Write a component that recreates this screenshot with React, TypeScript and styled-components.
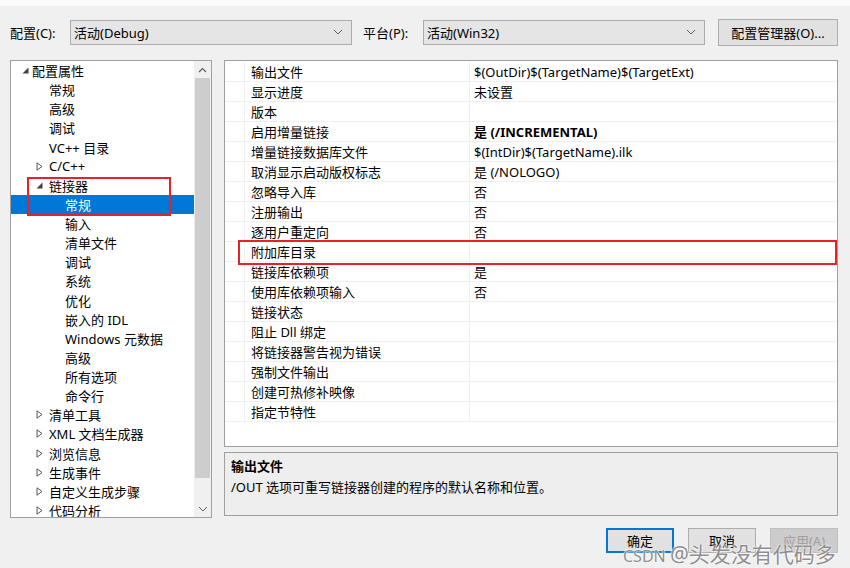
import styled, { createGlobalStyle } from 'styled-components'

const GlobalStyle = createGlobalStyle`
  html, body {
    margin: 0;
    padding: 0;
    background: #f0f0f0;
  }
  body {
    font-family: "Noto Sans", "Noto Sans CJK SC", sans-serif;
    font-size: 13px;
    color: #000;
  }
`

const Dialog = styled.div`
  position: relative;
  width: 850px;
  height: 568px;
  background: #f0f0f0;
  border-top: 6px solid #fbfbfb;
  box-sizing: border-box;
  overflow: hidden;
`

const Toolbar = styled.div`
  display: flex;
  align-items: center;
  height: 40px;
  padding: 12px 0 0 10px;
  box-sizing: border-box;
`

const Label = styled.span`
  width: ${p => p.$w}px;
  white-space: nowrap;
`

const Combo = styled.div`
  display: flex;
  align-items: center;
  justify-content: space-between;
  width: 282px;
  height: 25px;
  box-sizing: border-box;
  padding: 0 8px 0 3px;
  background: #e5e5e5;
  border: 1px solid #acacac;
  margin-right: ${p => p.$mr}px;
`

const ToolButton = styled.div`
  width: 120px;
  height: 27px;
  box-sizing: border-box;
  display: flex;
  align-items: center;
  justify-content: center;
  background: #e1e1e1;
  border: 1px solid #adadad;
`

const Main = styled.div`
  display: flex;
  gap: 12px;
  padding: 14px 0 0 10px;
`

const TreePanel = styled.div`
  position: relative;
  width: 202px;
  height: 458px;
  box-sizing: border-box;
  background: #fff;
  border: 1px solid #a0a0a0;
  display: flex;
`

const TreeList = styled.div`
  flex: 1;
  overflow: hidden;
`

const TreeRow = styled.div`
  height: 19.13px;
  display: flex;
  align-items: center;
  padding-left: ${p => p.$indent}px;
  background: ${p => (p.$selected ? '#0078d7' : 'transparent')};
  color: ${p => (p.$selected ? '#fff' : '#000')};
  white-space: nowrap;
`

const Twisty = styled.span`
  width: ${p => p.$w}px;
  display: flex;
  align-items: center;
`

const ScrollBar = styled.div`
  width: 17px;
  background: #f0f0f0;
  display: flex;
  flex-direction: column;
  align-items: center;
`

const ScrollArrow = styled.div`
  height: 17px;
  display: flex;
  align-items: center;
  justify-content: center;
`

const ScrollThumb = styled.div`
  width: 15px;
  height: 400px;
  background: #cdcdcd;
`

const ScrollSpacer = styled.div`
  flex: 1;
`

const RedBox = styled.div`
  position: absolute;
  border: 2px solid #e2232a;
  box-sizing: border-box;
  pointer-events: none;
`

const RightCol = styled.div`
  display: flex;
  flex-direction: column;
  gap: 5px;
  width: 614px;
`

const Grid = styled.div`
  position: relative;
  height: 387px;
  box-sizing: border-box;
  background: #fff;
  border: 1px solid #a0a0a0;
  padding-top: 1px;
`

const PropRow = styled.div`
  display: grid;
  grid-template-columns: 20px 225px 1fr;
  height: 20px;
  box-sizing: border-box;
  border-bottom: 1px solid #f0f0f0;
`

const Gutter = styled.div`
  border-right: 1px solid #f0f0f0;
  background: #fff;
`

const Cell = styled.div`
  display: flex;
  align-items: center;
  padding-left: ${p => p.$pl}px;
  font-weight: ${p => (p.$bold ? 700 : 400)};
  border-right: ${p => (p.$divider ? '1px solid #f0f0f0' : 'none')};
  white-space: nowrap;
`

const Desc = styled.div`
  height: 64px;
  box-sizing: border-box;
  background: #eeeeee;
  border: 1px solid #a0a0a0;
  padding: 3px 6px;
  line-height: 21px;
`

const DescTitle = styled.div`
  font-weight: 700;
`

const Footer = styled.div`
  display: flex;
  justify-content: flex-end;
  gap: 14px;
  padding: 10px 12px 0 0;
`

const DlgButton = styled.div`
  width: 68px;
  height: 25px;
  box-sizing: border-box;
  display: flex;
  align-items: center;
  justify-content: center;
  background: ${p => (p.$disabled ? '#cccccc' : '#e1e1e1')};
  color: ${p => (p.$disabled ? '#a0a0a0' : '#000')};
  border: ${p =>
    p.$primary ? '2px solid #0078d7' : p.$disabled ? '1px solid #bfbfbf' : '1px solid #adadad'};
`

const Watermark = styled.div`
  position: absolute;
  left: 623px;
  top: 532px;
  font-size: 21px;
  color: #8f8f8f;
  white-space: nowrap;
  text-shadow: 0 0 2px #fff, 0 0 2px #fff;
  pointer-events: none;
`

const WatermarkSmall = styled.span`
  font-size: 16px;
`

function Chevron() {
  return (
    <svg width="10" height="6" viewBox="0 0 10 6">
      <path d="M1 1 L5 5 L9 1" fill="none" stroke="#606060" strokeWidth="1" />
    </svg>
  )
}

function Expanded() {
  return (
    <svg width="7" height="7" viewBox="0 0 7 7">
      <path d="M6.5 0.5 L6.5 6.5 L0.5 6.5 Z" fill="#404040" />
    </svg>
  )
}

function Collapsed() {
  return (
    <svg width="7" height="9" viewBox="0 0 7 9">
      <path d="M1 0.8 L6 4.5 L1 8.2 Z" fill="none" stroke="#555" strokeWidth="1" />
    </svg>
  )
}

type Node = { label: string; indent: number; twisty?: 'open' | 'closed'; selected?: boolean }

// indent = where the label starts, measured from the panel's inner edge
const tree: Node[] = [
  { label: '配置属性', indent: 21, twisty: 'open' },
  { label: '常规', indent: 38 },
  { label: '高级', indent: 38 },
  { label: '调试', indent: 38 },
  { label: 'VC++ 目录', indent: 38 },
  { label: 'C/C++', indent: 38, twisty: 'closed' },
  { label: '链接器', indent: 38, twisty: 'open' },
  { label: '常规', indent: 54, selected: true },
  { label: '输入', indent: 54 },
  { label: '清单文件', indent: 54 },
  { label: '调试', indent: 54 },
  { label: '系统', indent: 54 },
  { label: '优化', indent: 54 },
  { label: '嵌入的 IDL', indent: 54 },
  { label: 'Windows 元数据', indent: 54 },
  { label: '高级', indent: 54 },
  { label: '所有选项', indent: 54 },
  { label: '命令行', indent: 54 },
  { label: '清单工具', indent: 38, twisty: 'closed' },
  { label: 'XML 文档生成器', indent: 38, twisty: 'closed' },
  { label: '浏览信息', indent: 38, twisty: 'closed' },
  { label: '生成事件', indent: 38, twisty: 'closed' },
  { label: '自定义生成步骤', indent: 38, twisty: 'closed' },
  { label: '代码分析', indent: 38, twisty: 'closed' },
]

const props: [string, string, boolean?][] = [
  ['输出文件', '$(OutDir)$(TargetName)$(TargetExt)'],
  ['显示进度', '未设置'],
  ['版本', ''],
  ['启用增量链接', '是 (/INCREMENTAL)', true],
  ['增量链接数据库文件', '$(IntDir)$(TargetName).ilk'],
  ['取消显示启动版权标志', '是 (/NOLOGO)'],
  ['忽略导入库', '否'],
  ['注册输出', '否'],
  ['逐用户重定向', '否'],
  ['附加库目录', ''],
  ['链接库依赖项', '是'],
  ['使用库依赖项输入', '否'],
  ['链接状态', ''],
  ['阻止 Dll 绑定', ''],
  ['将链接器警告视为错误', ''],
  ['强制文件输出', ''],
  ['创建可热修补映像', ''],
  ['指定节特性', ''],
]

export default function App() {
  return (
    <Dialog>
      <GlobalStyle />
      <Toolbar>
        <Label $w={60}>配置(C):</Label>
        <Combo $mr={11}>
          <span>活动(Debug)</span>
          <Chevron />
        </Combo>
        <Label $w={60}>平台(P):</Label>
        <Combo $mr={13}>
          <span>活动(Win32)</span>
          <Chevron />
        </Combo>
        <ToolButton>配置管理器(O)...</ToolButton>
      </Toolbar>
      <Main>
        <TreePanel>
          <TreeList>
            {tree.map((n, i) => {
              const tw = n.twisty === 'open' && n.indent === 21 ? 10 : 13
              return (
                <TreeRow key={i} $indent={n.twisty ? n.indent - tw : n.indent} $selected={n.selected}>
                  {n.twisty && (
                    <Twisty $w={tw}>{n.twisty === 'open' ? <Expanded /> : <Collapsed />}</Twisty>
                  )}
                  {n.label}
                </TreeRow>
              )
            })}
          </TreeList>
          <ScrollBar>
            <ScrollArrow>
              <svg width="9" height="6" viewBox="0 0 9 6">
                <path d="M1 5 L4.5 1.5 L8 5" fill="none" stroke="#606060" strokeWidth="1.2" />
              </svg>
            </ScrollArrow>
            <ScrollThumb />
            <ScrollSpacer />
            <ScrollArrow>
              <Chevron />
            </ScrollArrow>
          </ScrollBar>
          <RedBox style={{ left: 16, top: 116, width: 144, height: 39 }} />
        </TreePanel>
        <RightCol>
          <Grid>
            {props.map(([k, v, b], i) => (
              <PropRow key={i}>
                <Gutter />
                <Cell $pl={6} $divider>{k}</Cell>
                <Cell $pl={4} $bold={b}>{v}</Cell>
              </PropRow>
            ))}
            <RedBox style={{ left: 13, top: 179, width: 599, height: 25 }} />
          </Grid>
          <Desc>
            <DescTitle>输出文件</DescTitle>
            <div>/OUT 选项可重写链接器创建的程序的默认名称和位置。</div>
          </Desc>
        </RightCol>
      </Main>
      <Footer>
        <DlgButton $primary>确定</DlgButton>
        <DlgButton>取消</DlgButton>
        <DlgButton $disabled>应用(A)</DlgButton>
      </Footer>
      <Watermark>
        <WatermarkSmall>CSDN </WatermarkSmall>@头发没有代码多
      </Watermark>
    </Dialog>
  )
}
